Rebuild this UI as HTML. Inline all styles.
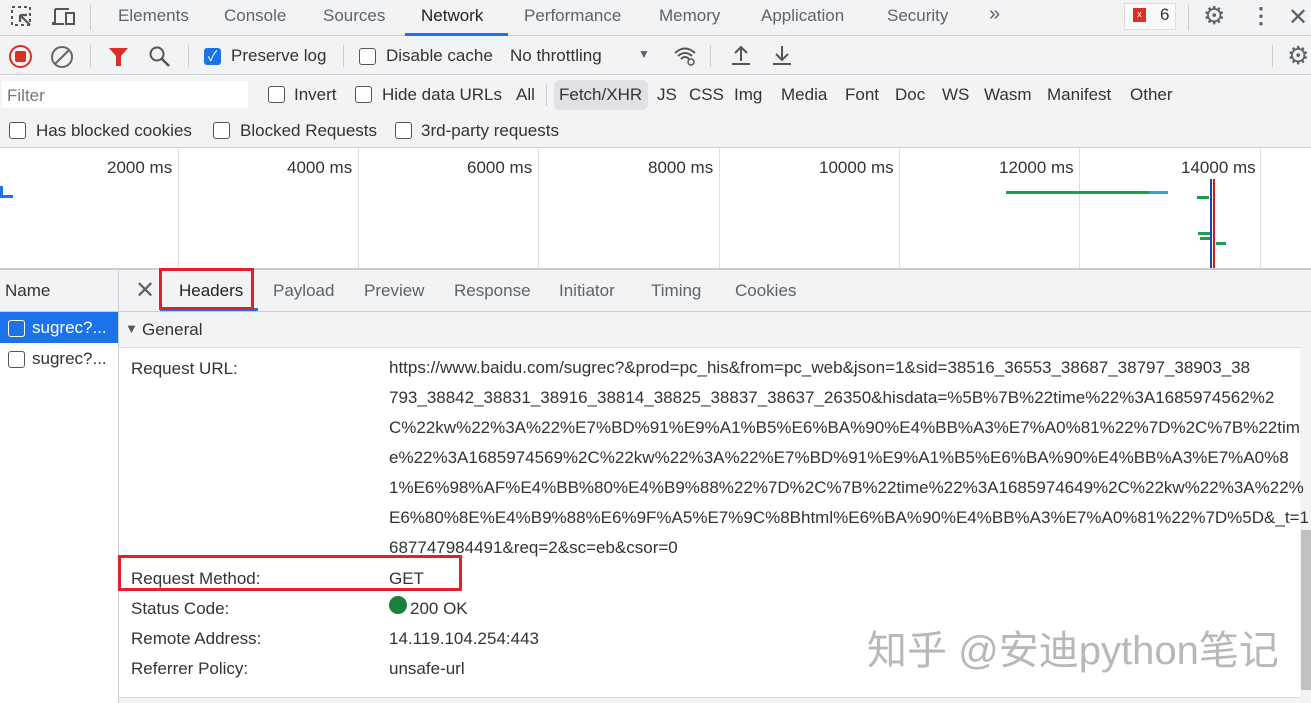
<!DOCTYPE html>
<html><head><meta charset="utf-8"><style>
*{margin:0;padding:0;box-sizing:border-box}
body{width:1311px;height:703px;overflow:hidden;background:#fff;font-family:"Liberation Sans","Noto Sans CJK SC",sans-serif;font-size:17px;color:#333;position:relative}
.a{position:absolute;white-space:nowrap}
.g{color:#5f6368}
.cb{position:absolute;width:17px;height:17px;border:1.5px solid #555;border-radius:3px;background:#fff}
.vl{position:absolute;width:1px;background:#ccc}
</style></head><body>
<div class="a" style="left:0;top:0;width:1311px;height:36px;background:#f1f3f4;border-bottom:1px solid #cbcdd1"></div>
<svg class="a" style="left:10px;top:5px" width="24" height="24"><rect x="2" y="2" width="18" height="18" fill="none" stroke="#555" stroke-width="2" stroke-dasharray="3 3"/><path d="M10 10 L20 20 M10 10 h7 M10 10 v7" stroke="#555" stroke-width="2.2" fill="none"/></svg>
<svg class="a" style="left:51px;top:5px" width="26" height="24"><path d="M4 4 v14 h-3 M4 4 h14 M1 19 h12" stroke="#555" stroke-width="2" fill="none"/><rect x="15" y="8" width="8" height="11" fill="none" stroke="#555" stroke-width="2"/></svg>
<div class="vl" style="left:90px;top:5px;height:25px"></div>
<div class="a g" style="left:118px;top:6px">Elements</div>
<div class="a g" style="left:224px;top:6px">Console</div>
<div class="a g" style="left:323px;top:6px">Sources</div>
<div class="a" style="left:421px;top:6px;color:#222">Network</div>
<div class="a" style="left:405px;top:33px;width:103px;height:3px;background:#1a73e8"></div>
<div class="a g" style="left:524px;top:6px">Performance</div>
<div class="a g" style="left:659px;top:6px">Memory</div>
<div class="a g" style="left:761px;top:6px">Application</div>
<div class="a g" style="left:887px;top:6px">Security</div>
<div class="a g" style="left:989px;top:3px;font-size:20px">»</div>
<div class="a" style="left:1124px;top:3px;width:52px;height:27px;border:1px solid #ddd;background:#fafafa"></div>
<div class="a" style="left:1133px;top:8px;width:13px;height:14px;background:#d93025;color:#fff;font-size:9px;text-align:center;line-height:13px">x</div>
<div class="a" style="left:1160px;top:5px">6</div>
<div class="vl" style="left:1188px;top:5px;height:25px"></div>
<div class="a g" style="left:1203px;top:1px;font-size:25px">⚙</div>
<div class="a g" style="left:1250px;top:3px;font-size:22px;font-weight:bold">⋮</div>
<div class="a g" style="left:1288px;top:3px;font-size:24px">✕</div>
<div class="a" style="left:0;top:36px;width:1311px;height:39px;background:#f1f3f4;border-bottom:1px solid #cbcdd1"></div>
<div class="a" style="left:9px;top:45px;width:23px;height:23px;border:2.5px solid #d93025;border-radius:50%"></div>
<div class="a" style="left:15px;top:51px;width:11px;height:11px;background:#d93025;border-radius:2px"></div>
<svg class="a" style="left:50px;top:45px" width="24" height="24"><circle cx="12" cy="12" r="10" fill="none" stroke="#666" stroke-width="2"/><path d="M5 19 L19 5" stroke="#666" stroke-width="2"/></svg>
<div class="vl" style="left:90px;top:45px;height:22px"></div>
<svg class="a" style="left:108px;top:46px" width="22" height="22"><path d="M1 2 H20 L13 10 V20 H8 V10 Z" fill="#d93025"/></svg>
<svg class="a" style="left:148px;top:45px" width="24" height="24"><circle cx="9" cy="9" r="6.5" fill="none" stroke="#555" stroke-width="2"/><path d="M14 14 L21 21" stroke="#555" stroke-width="2.5"/></svg>
<div class="vl" style="left:188px;top:45px;height:22px"></div>
<div class="a" style="left:204px;top:48px;width:17px;height:17px;background:#1a73e8;border-radius:3px;color:#fff;font-size:14px;text-align:center;line-height:17px">✓</div>
<div class="a" style="left:231px;top:46px">Preserve log</div>
<div class="vl" style="left:343px;top:45px;height:22px"></div>
<div class="cb" style="left:359px;top:48px"></div>
<div class="a" style="left:386px;top:46px">Disable cache</div>
<div class="a" style="left:510px;top:46px">No throttling</div>
<div class="a g" style="left:638px;top:47px;font-size:12px">▼</div>
<svg class="a" style="left:672px;top:44px" width="28" height="24"><path d="M3 9 Q13 0 23 9 M6 12 Q13 6 20 12 M9 15 Q13 11 17 15" stroke="#555" stroke-width="2" fill="none"/><circle cx="19" cy="18" r="3" fill="none" stroke="#555" stroke-width="1.5"/></svg>
<div class="vl" style="left:710px;top:45px;height:22px"></div>
<svg class="a" style="left:730px;top:44px" width="22" height="24"><path d="M11 3 V17 M5 9 L11 3 L17 9 M2 20 H20" stroke="#555" stroke-width="2" fill="none"/></svg>
<svg class="a" style="left:771px;top:44px" width="22" height="24"><path d="M11 2 V16 M5 10 L11 16 L17 10 M2 20 H20" stroke="#555" stroke-width="2" fill="none"/></svg>
<div class="vl" style="left:1272px;top:45px;height:22px"></div>
<div class="a g" style="left:1287px;top:41px;font-size:25px">⚙</div>
<div class="a" style="left:0;top:76px;width:1311px;height:38px;background:#f1f3f4"></div>
<div class="a" style="left:2px;top:81px;width:246px;height:27px;background:#fff"></div>
<div class="a" style="left:7px;top:86px;color:#777">Filter</div>
<div class="cb" style="left:268px;top:86px"></div><div class="a" style="left:294px;top:85px">Invert</div>
<div class="cb" style="left:355px;top:86px"></div><div class="a" style="left:382px;top:85px">Hide data URLs</div>
<div class="a" style="left:516px;top:85px">All</div>
<div class="vl" style="left:546px;top:84px;height:22px"></div>
<div class="a" style="left:554px;top:80px;width:94px;height:30px;background:#dfe1e5;border-radius:6px"></div>
<div class="a" style="left:559px;top:85px">Fetch/XHR</div>
<div class="a" style="left:657px;top:85px">JS</div>
<div class="a" style="left:689px;top:85px">CSS</div>
<div class="a" style="left:734px;top:85px">Img</div>
<div class="a" style="left:781px;top:85px">Media</div>
<div class="a" style="left:845px;top:85px">Font</div>
<div class="a" style="left:895px;top:85px">Doc</div>
<div class="a" style="left:942px;top:85px">WS</div>
<div class="a" style="left:984px;top:85px">Wasm</div>
<div class="a" style="left:1047px;top:85px">Manifest</div>
<div class="a" style="left:1130px;top:85px">Other</div>
<div class="a" style="left:0;top:114px;width:1311px;height:34px;background:#f1f3f4;border-bottom:1px solid #cbcdd1"></div>
<div class="cb" style="left:9px;top:122px"></div><div class="a" style="left:36px;top:121px">Has blocked cookies</div>
<div class="cb" style="left:213px;top:122px"></div><div class="a" style="left:240px;top:121px">Blocked Requests</div>
<div class="cb" style="left:395px;top:122px"></div><div class="a" style="left:421px;top:121px">3rd-party requests</div>
<div class="vl" style="left:178px;top:148px;height:120px;background:#ddd"></div>
<div class="vl" style="left:358px;top:148px;height:120px;background:#ddd"></div>
<div class="vl" style="left:538px;top:148px;height:120px;background:#ddd"></div>
<div class="vl" style="left:719px;top:148px;height:120px;background:#ddd"></div>
<div class="vl" style="left:899px;top:148px;height:120px;background:#ddd"></div>
<div class="vl" style="left:1079px;top:148px;height:120px;background:#ddd"></div>
<div class="vl" style="left:1260px;top:148px;height:120px;background:#ddd"></div>
<div class="a" style="left:107px;top:158px">2000 ms</div>
<div class="a" style="left:287px;top:158px">4000 ms</div>
<div class="a" style="left:467px;top:158px">6000 ms</div>
<div class="a" style="left:648px;top:158px">8000 ms</div>
<div class="a" style="left:819px;top:158px">10000 ms</div>
<div class="a" style="left:999px;top:158px">12000 ms</div>
<div class="a" style="left:1181px;top:158px">14000 ms</div>
<div class="a" style="left:0;top:186px;width:3px;height:10px;background:#1a73e8"></div>
<div class="a" style="left:0;top:195px;width:13px;height:3px;background:#1a73e8"></div>
<div class="a" style="left:1006px;top:191px;width:143px;height:3px;background:#1e9e4a"></div>
<div class="a" style="left:1149px;top:191px;width:19px;height:3px;background:#3d9cd8"></div>
<div class="a" style="left:1197px;top:196px;width:12px;height:3px;background:#1e9e4a"></div>
<div class="a" style="left:1198px;top:232px;width:12px;height:3px;background:#1e9e4a"></div>
<div class="a" style="left:1200px;top:237px;width:11px;height:3px;background:#1e9e4a"></div>
<div class="a" style="left:1216px;top:242px;width:10px;height:3px;background:#1e9e4a"></div>
<div class="a" style="left:1210px;top:179px;width:2px;height:90px;background:#2c3fb0"></div>
<div class="a" style="left:1213px;top:179px;width:2px;height:90px;background:#c5221f"></div>
<div class="a" style="left:0;top:268px;width:1311px;height:2px;background:#cbcdd1"></div>
<div class="a" style="left:0;top:270px;width:118px;height:42px;background:#f1f3f4;border-bottom:1px solid #cbcdd1"></div>
<div class="vl" style="left:118px;top:270px;height:433px;background:#cbcdd1"></div>
<div class="a" style="left:5px;top:281px">Name</div>
<div class="a" style="left:0;top:312px;width:118px;height:31px;background:#1a73e8"></div>
<div class="cb" style="left:8px;top:320px;border-color:#fff;background:#1a73e8"></div>
<div class="a" style="left:32px;top:318px;color:#fff">sugrec?...</div>
<div class="cb" style="left:8px;top:351px"></div>
<div class="a" style="left:32px;top:349px">sugrec?...</div>
<div class="a" style="left:119px;top:270px;width:1192px;height:42px;background:#f1f3f4;border-bottom:1px solid #cbcdd1"></div>
<div class="a g" style="left:135px;top:276px;font-size:24px">✕</div>
<div class="a" style="left:179px;top:281px;color:#222">Headers</div>
<div class="a" style="left:160px;top:308px;width:98px;height:3px;background:#1a73e8"></div>
<div class="a" style="left:159px;top:268px;width:95px;height:42px;border:3px solid #e0202a"></div>
<div class="a g" style="left:273px;top:281px">Payload</div>
<div class="a g" style="left:364px;top:281px">Preview</div>
<div class="a g" style="left:454px;top:281px">Response</div>
<div class="a g" style="left:559px;top:281px">Initiator</div>
<div class="a g" style="left:651px;top:281px">Timing</div>
<div class="a g" style="left:735px;top:281px">Cookies</div>
<div class="a" style="left:119px;top:312px;width:1181px;height:36px;background:#f1f3f4;border-bottom:1px solid #dadce0"></div>
<div class="a" style="left:125px;top:321px;font-size:13px;color:#555">▼</div>
<div class="a" style="left:142px;top:320px">General</div>
<div class="a" style="left:1300px;top:312px;width:11px;height:391px;background:#f1f3f4"></div>
<div class="a" style="left:1301px;top:530px;width:10px;height:160px;background:#c1c1c1"></div>
<div class="a" style="left:131px;top:359px">Request URL:</div>
<div class="a" style="left:389px;top:353px;line-height:30px">https://www.baidu.com/sugrec?&amp;prod=pc_his&amp;from=pc_web&amp;json=1&amp;sid=38516_36553_38687_38797_38903_38<br>793_38842_38831_38916_38814_38825_38837_38637_26350&amp;hisdata=%5B%7B%22time%22%3A1685974562%2<br>C%22kw%22%3A%22%E7%BD%91%E9%A1%B5%E6%BA%90%E4%BB%A3%E7%A0%81%22%7D%2C%7B%22tim<br>e%22%3A1685974569%2C%22kw%22%3A%22%E7%BD%91%E9%A1%B5%E6%BA%90%E4%BB%A3%E7%A0%8<br>1%E6%98%AF%E4%BB%80%E4%B9%88%22%7D%2C%7B%22time%22%3A1685974649%2C%22kw%22%3A%22%<br>E6%80%8E%E4%B9%88%E6%9F%A5%E7%9C%8Bhtml%E6%BA%90%E4%BB%A3%E7%A0%81%22%7D%5D&amp;_t=1<br>687747984491&amp;req=2&amp;sc=eb&amp;csor=0</div>
<div class="a" style="left:118px;top:555px;width:344px;height:36px;border:3px solid #e0202a"></div>
<div class="a" style="left:131px;top:569px">Request Method:</div>
<div class="a" style="left:389px;top:569px">GET</div>
<div class="a" style="left:131px;top:599px">Status Code:</div>
<div class="a" style="left:389px;top:596px;width:18px;height:18px;border-radius:50%;background:#188038"></div>
<div class="a" style="left:410px;top:599px">200 OK</div>
<div class="a" style="left:131px;top:629px">Remote Address:</div>
<div class="a" style="left:389px;top:629px">14.119.104.254:443</div>
<div class="a" style="left:131px;top:659px">Referrer Policy:</div>
<div class="a" style="left:389px;top:659px">unsafe-url</div>
<div class="a" style="left:119px;top:697px;width:1181px;height:6px;background:#f1f3f4;border-top:1px solid #dadce0"></div>
<div class="a" style="left:867px;top:618px;font-size:40px;color:#b8b8b8;font-family:'Liberation Sans','Noto Sans CJK SC',sans-serif">知乎 @安迪python笔记</div>
</body></html>
